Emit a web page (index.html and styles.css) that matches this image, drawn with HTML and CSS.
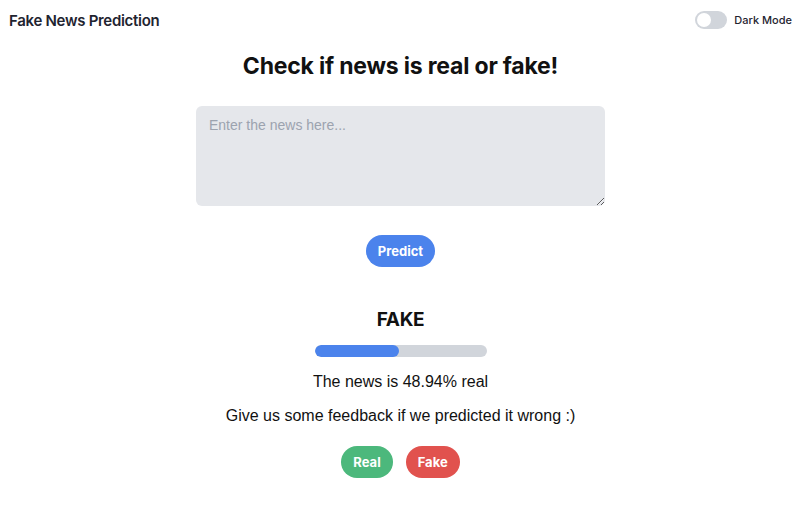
FILE: index.html
```html
<!DOCTYPE html>
<html lang="en">
<head>
<meta charset="utf-8">
<title>Fake News Prediction</title>
<link rel="stylesheet" href="styles.css">
</head>
<body>
<header class="topbar">
  <div class="brand">Fake News Prediction</div>
  <label class="mode">
    <span class="switch"><span class="knob"></span></span>
    <span class="mode-label">Dark Mode</span>
  </label>
</header>
<main class="main">
  <h1 class="title">Check if news is real or fake!</h1>
  <textarea class="news" placeholder="Enter the news here..."></textarea>
  <button class="btn btn-blue predict">Predict</button>
  <section class="result">
    <h2 class="verdict">FAKE</h2>
    <div class="bar"><div class="fill" style="width:48.94%"></div></div>
    <p class="pct">The news is 48.94% real</p>
    <p class="ask">Give us some feedback if we predicted it wrong :)</p>
    <div class="feedback">
      <button class="btn btn-green">Real</button>
      <button class="btn btn-red">Fake</button>
    </div>
  </section>
</main>
</body>
</html>
```
FILE: styles.css
```css
* { box-sizing: border-box; }
body {
  margin: 0;
  font-family: Inter, "Liberation Sans", sans-serif;
  color: #111;
  background: #fff;
}
.topbar {
  display: flex;
  justify-content: space-between;
  align-items: center;
  height: 40px;
  padding: 0 14px 0 9px;
}
.brand {
  font-size: 15px;
  font-weight: 600;
  color: #1f2430;
  letter-spacing: -0.3px;
}
.mode {
  display: flex;
  align-items: center;
  gap: 7px;
}
.switch {
  width: 32px;
  height: 18px;
  border-radius: 9px;
  background: #d1d5db;
  position: relative;
}
.knob {
  position: absolute;
  left: 2px;
  top: 2px;
  width: 14px;
  height: 14px;
  border-radius: 50%;
  background: #fff;
}
.mode-label {
  font-size: 11px;
  font-weight: 500;
  color: #1f2430;
}
.main {
  display: flex;
  flex-direction: column;
  align-items: center;
  padding-right: 5px;
}
.title {
  margin: 11px 0 0;
  font-size: 23px;
  font-weight: 700;
  line-height: 30px;
  letter-spacing: -0.2px;
}
.news {
  margin-top: 25px;
  width: 409px;
  height: 100px;
  border: none;
  border-radius: 6px;
  background: #e5e7eb;
  padding: 11px 13px;
  font-family: "Liberation Sans", sans-serif;
  font-size: 14px;
  resize: vertical;
}
.news::placeholder { color: #9ca3af; }
.btn {
  border: none;
  height: 32px;
  border-radius: 16px;
  padding: 0 12px;
  color: #fff;
  font-family: Inter, sans-serif;
  font-weight: 700;
  font-size: 13px;
}
.btn-blue { background: #4b83ec; }
.btn-green { background: #4cb87c; }
.btn-red { background: #e1524e; }
.predict { margin-top: 29px; }
.result {
  display: flex;
  flex-direction: column;
  align-items: center;
}
.verdict {
  margin: 41px 0 0;
  font-size: 19px;
  font-weight: 700;
  line-height: 24px;
  letter-spacing: -0.3px;
}
.bar {
  margin-top: 13px;
  width: 172px;
  height: 12px;
  border-radius: 6px;
  background: #d1d5db;
  overflow: hidden;
}
.fill {
  height: 100%;
  background: #4b83ec;
  border-radius: 6px;
}
.pct, .ask {
  font-family: "Liberation Sans", sans-serif;
  font-size: 16px;
  line-height: 22px;
}
.pct { margin: 14px 0 0; }
.ask { margin: 12px 0 0; }
.feedback {
  display: flex;
  gap: 13px;
  margin-top: 19px;
}
```
